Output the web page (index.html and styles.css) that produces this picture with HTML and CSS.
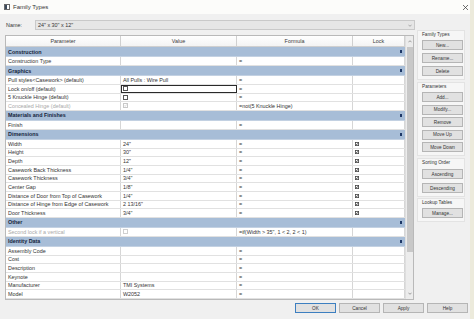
FILE: index.html
```html
<!DOCTYPE html>
<html lang="en">
<head>
    <meta charset="UTF-8">
    <title>Family Types</title>
    <link rel="stylesheet" href="styles.css">
</head>
<body>
    <div class="window">
        <div class="titlebar">
            <svg class="app-icon" viewBox="0 0 6 6"><rect x=".5" y=".5" width="5" height="5" fill="#fff" stroke="#6a6a6a"/><rect x="1" y="1" width="2" height="4" fill="#3b4a5c"/></svg>
            <span class="title">Family Types</span>
            <svg class="close" viewBox="0 0 5 5"><path d="M0 0 5 5M5 0 0 5" stroke="#333" stroke-width=".7"/></svg>
        </div>

        <div class="name-row">
            <span class="name-label">Name:</span>
            <div class="select">
                <span>24" x 30" x 12"</span>
                <svg class="chev" viewBox="0 0 5 3"><path d="M.5 .5 2.5 2.5 4.5 .5" fill="none" stroke="#777" stroke-width=".7"/></svg>
            </div>
        </div>

        <div class="main">
            <div class="table-wrap">
                <div class="grid">
                    <div class="head">
                        <span>Parameter</span>
                        <span>Value</span>
                        <span>Formula</span>
                        <span>Lock</span>
                    </div>

                    <div class="group"><span>Construction</span><i class="mark"></i></div>
                    <div class="row"><span>Construction Type</span><span></span><span>=</span><span></span></div>

                    <div class="group"><span>Graphics</span><i class="mark"></i></div>
                    <div class="row"><span>Pull styles&lt;Casework&gt; (default)</span><span>All Pulls : Wire Pull</span><span>=</span><span></span></div>
                    <div class="row"><span>Lock on/off (default)</span><span class="selected"><svg class="cb" viewBox="0 0 5 5"><rect x=".5" y=".5" width="4" height="4" fill="#fff" stroke="#555"/></svg></span><span>=</span><span></span></div>
                    <div class="row"><span>5 Knuckle Hinge (default)</span><span><svg class="cb" viewBox="0 0 5 5"><rect x=".5" y=".5" width="4" height="4" fill="#fff" stroke="#555"/></svg></span><span>=</span><span></span></div>
                    <div class="row dim"><span>Concealed Hinge (default)</span><span><svg class="cb" viewBox="0 0 5 5"><rect x=".5" y=".5" width="4" height="4" fill="#fff" stroke="#c8c8c8"/><path d="M1.3 2.5 2.2 3.4 3.8 1.4" fill="none" stroke="#c8c8c8" stroke-width=".7"/></svg></span><span>=not(5 Knuckle Hinge)</span><span></span></div>

                    <div class="group"><span>Materials and Finishes</span><i class="mark"></i></div>
                    <div class="row"><span>Finish</span><span></span><span>=</span><span></span></div>

                    <div class="group"><span>Dimensions</span><i class="mark"></i></div>
                    <div class="row"><span>Width</span><span>24"</span><span>=</span><span><svg class="lk" viewBox="0 0 5 5"><rect x=".5" y=".5" width="4" height="4" fill="#fff" stroke="#444"/><path d="M1.3 2.5 2.2 3.4 3.8 1.4" fill="none" stroke="#111" stroke-width=".8"/></svg></span></div>
                    <div class="row"><span>Height</span><span>30"</span><span>=</span><span><svg class="lk" viewBox="0 0 5 5"><rect x=".5" y=".5" width="4" height="4" fill="#fff" stroke="#444"/><path d="M1.3 2.5 2.2 3.4 3.8 1.4" fill="none" stroke="#111" stroke-width=".8"/></svg></span></div>
                    <div class="row"><span>Depth</span><span>12"</span><span>=</span><span><svg class="lk" viewBox="0 0 5 5"><rect x=".5" y=".5" width="4" height="4" fill="#fff" stroke="#444"/><path d="M1.3 2.5 2.2 3.4 3.8 1.4" fill="none" stroke="#111" stroke-width=".8"/></svg></span></div>
                    <div class="row"><span>Casework Back Thickness</span><span>1/4"</span><span>=</span><span><svg class="lk" viewBox="0 0 5 5"><rect x=".5" y=".5" width="4" height="4" fill="#fff" stroke="#444"/><path d="M1.3 2.5 2.2 3.4 3.8 1.4" fill="none" stroke="#111" stroke-width=".8"/></svg></span></div>
                    <div class="row"><span>Casework Thickness</span><span>3/4"</span><span>=</span><span><svg class="lk" viewBox="0 0 5 5"><rect x=".5" y=".5" width="4" height="4" fill="#fff" stroke="#444"/><path d="M1.3 2.5 2.2 3.4 3.8 1.4" fill="none" stroke="#111" stroke-width=".8"/></svg></span></div>
                    <div class="row"><span>Center Gap</span><span>1/8"</span><span>=</span><span><svg class="lk" viewBox="0 0 5 5"><rect x=".5" y=".5" width="4" height="4" fill="#fff" stroke="#444"/><path d="M1.3 2.5 2.2 3.4 3.8 1.4" fill="none" stroke="#111" stroke-width=".8"/></svg></span></div>
                    <div class="row"><span>Distance of Door from Top of Casework</span><span>1/4"</span><span>=</span><span><svg class="lk" viewBox="0 0 5 5"><rect x=".5" y=".5" width="4" height="4" fill="#fff" stroke="#444"/><path d="M1.3 2.5 2.2 3.4 3.8 1.4" fill="none" stroke="#111" stroke-width=".8"/></svg></span></div>
                    <div class="row"><span>Distance of Hinge from Edge of Casework</span><span>2 13/16"</span><span>=</span><span><svg class="lk" viewBox="0 0 5 5"><rect x=".5" y=".5" width="4" height="4" fill="#fff" stroke="#444"/><path d="M1.3 2.5 2.2 3.4 3.8 1.4" fill="none" stroke="#111" stroke-width=".8"/></svg></span></div>
                    <div class="row"><span>Door Thickness</span><span>3/4"</span><span>=</span><span><svg class="lk" viewBox="0 0 5 5"><rect x=".5" y=".5" width="4" height="4" fill="#fff" stroke="#444"/><path d="M1.3 2.5 2.2 3.4 3.8 1.4" fill="none" stroke="#111" stroke-width=".8"/></svg></span></div>

                    <div class="group"><span>Other</span><i class="mark"></i></div>
                    <div class="row dim"><span>Second lock if a vertical</span><span><svg class="cb" viewBox="0 0 5 5"><rect x=".5" y=".5" width="4" height="4" fill="#fff" stroke="#d0d0d0"/></svg></span><span>=if(Width &gt; 35", 1 &lt; 2, 2 &lt; 1)</span><span></span></div>

                    <div class="group"><span>Identity Data</span><i class="mark"></i></div>
                    <div class="row"><span>Assembly Code</span><span></span><span>=</span><span></span></div>
                    <div class="row"><span>Cost</span><span></span><span>=</span><span></span></div>
                    <div class="row"><span>Description</span><span></span><span>=</span><span></span></div>
                    <div class="row"><span>Keynote</span><span></span><span>=</span><span></span></div>
                    <div class="row"><span>Manufacturer</span><span>TMI Systems</span><span>=</span><span></span></div>
                    <div class="row"><span>Model</span><span>W2052</span><span>=</span><span></span></div>
                </div>

                <div class="scroll">
                    <div class="arrow"><svg viewBox="0 0 5 3"><path d="M.5 2.5 2.5 .5 4.5 2.5" fill="none" stroke="#606060" stroke-width=".7"/></svg></div>
                    <div class="thumb"></div>
                    <div class="track"></div>
                    <div class="arrow"><svg viewBox="0 0 5 3"><path d="M.5 .5 2.5 2.5 4.5 .5" fill="none" stroke="#606060" stroke-width=".7"/></svg></div>
                </div>
            </div>

            <div class="side">
                <div class="side-group">
                    <div class="side-label">Family Types</div>
                    <div class="btns">
                        <div class="btn">New...</div>
                        <div class="btn">Rename...</div>
                        <div class="btn">Delete</div>
                    </div>
                </div>
                <div class="side-group params">
                    <div class="side-label">Parameters</div>
                    <div class="btns">
                        <div class="btn">Add...</div>
                        <div class="btn">Modify...</div>
                        <div class="btn">Remove</div>
                        <div class="btn">Move Up</div>
                        <div class="btn">Move Down</div>
                    </div>
                </div>
                <div class="side-group sorting">
                    <div class="side-label">Sorting Order</div>
                    <div class="btns">
                        <div class="btn">Ascending</div>
                        <div class="btn">Descending</div>
                    </div>
                </div>
                <div class="side-group lookup">
                    <div class="side-label">Lookup Tables</div>
                    <div class="btns">
                        <div class="btn">Manage...</div>
                    </div>
                </div>
            </div>
        </div>

        <div class="footer">
            <div class="btn default">OK</div>
            <div class="btn">Cancel</div>
            <div class="btn">Apply</div>
            <div class="btn">Help</div>
        </div>
    </div>
</body>
</html>
```

FILE: styles.css
```css
* { margin: 0; padding: 0; box-sizing: border-box; }
body {
    font-family: "Liberation Sans", Arial, sans-serif;
    background: #eceadb;
    color: #1e1e1e;
}
.window {
    width: 470px;
    height: 319px;
    background: #f0f0f0;
    display: flex;
    flex-direction: column;
}

/* title bar */
.titlebar {
    height: 14px;
    background: #fcfcfa;
    display: flex;
    align-items: center;
    padding: 0 2px 0 4px;
    font-size: 6px;
    color: #333;
}
.app-icon { width: 6px; height: 6px; margin-right: 3px; }
.title { flex: 1; }
.close { width: 5px; height: 5px; }

/* name selector */
.name-row {
    height: 16px;
    display: flex;
    align-items: flex-end;
    padding-left: 6px;
    font-size: 5.4px;
    color: #333;
}
.name-label { width: 29px; line-height: 10px; }
.select {
    width: 380px;
    height: 10px;
    border: 1px solid #c9c9c9;
    background: #e6e6e6;
    display: flex;
    align-items: center;
    justify-content: space-between;
    padding: 0 2px;
}
.chev { width: 4px; height: 3px; }

/* table */
.main { height: 270px; display: flex; padding-left: 5px; }
.table-wrap {
    margin-top: 5px;
    width: 409px;
    height: 265px;
    border: 1px solid #b9b9b9;
    background: #fff;
    display: flex;
}
.grid {
    width: 399px;
    display: flex;
    flex-direction: column;
    overflow: hidden;
    font-size: 5.4px;
}
.head, .row {
    display: grid;
    grid-template-columns: 115px 116px 116px 52px;
    flex-shrink: 0;
}
.head {
    height: 11px;
    border-bottom: 1px solid #cfcfcf;
    background: linear-gradient(#ffffff, #f3f3f3);
}
.head span {
    border-right: 1px solid #d0d0d0;
    text-align: center;
    line-height: 10px;
    color: #3a3a3a;
}
.group {
    height: 10.3px;
    flex-shrink: 0;
    background: #a7bdd7;
    border-bottom: 1px solid #c3d1e2;
    display: flex;
    align-items: center;
    justify-content: space-between;
    padding: 0 3px 0 2px;
    font-weight: bold;
    color: #14243c;
}
.mark { width: 2px; height: 3px; background: #1d3766; }
.row {
    height: 8.65px;
    border-bottom: 1px solid #e1e1e1;
    color: #333;
}
.row span {
    border-right: 1px solid #d6d6d6;
    padding-left: 2px;
    white-space: nowrap;
    overflow: hidden;
    display: flex;
    align-items: center;
}
.row.dim span:first-child { color: #a9a9a9; }
.row .selected { outline: 1px solid #2a2a2a; outline-offset: -1px; }
.cb { width: 5px; height: 5px; }
.lk { width: 4px; height: 4px; }

/* scrollbar */
.scroll {
    width: 8px;
    background: #ececec;
    border-left: 1px solid #dedede;
    display: flex;
    flex-direction: column;
    align-items: center;
}
.arrow {
    height: 11px;
    display: flex;
    align-items: center;
    justify-content: center;
}
.arrow svg { width: 4px; height: 3px; }
.thumb { width: 6px; height: 205px; background: #c8c8c8; }
.track { flex: 1; }

/* side buttons */
.side { width: 55px; display: flex; flex-direction: column; }
.side-group {
    margin: 0 4px 0 3px;
    padding: 0 0 3px 4px;
    background: #f6f6f6;
    border: 1px solid #e3e3e3;
}
.side-label { height: 8px; line-height: 8px; font-size: 4.7px; color: #333; }
.btns { display: flex; flex-direction: column; gap: 3px; margin-top: 1px; }
.params { margin-top: 2px; }
.params .btns { gap: 2.5px; }
.sorting { margin-top: 2px; }
.sorting .btns { gap: 4px; margin-top: 2px; }
.lookup { margin-top: 1px; }
.btn {
    width: 41px;
    height: 10px;
    border: 1px solid #b5b5b5;
    background: #e1e1e1;
    font-size: 4.7px;
    color: #333;
    display: flex;
    align-items: center;
    justify-content: center;
}
.btn.default { border-color: #3d7fc0; }

/* dialog buttons */
.footer {
    display: flex;
    justify-content: flex-end;
    gap: 3px;
    padding: 3px 2px 0 0;
}
```
